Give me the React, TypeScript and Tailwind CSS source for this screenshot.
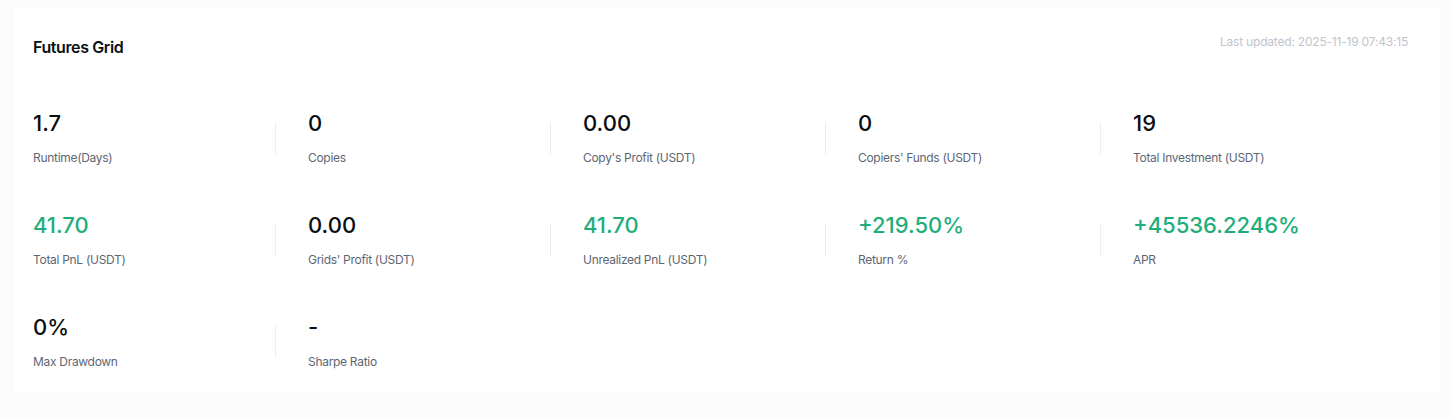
const stats = [
  { value: '1.7', label: 'Runtime(Days)' },
  { value: '0', label: 'Copies' },
  { value: '0.00', label: "Copy's Profit (USDT)" },
  { value: '0', label: "Copiers' Funds (USDT)" },
  { value: '19', label: 'Total Investment (USDT)' },
  { value: '41.70', label: 'Total PnL (USDT)', up: true },
  { value: '0.00', label: "Grids' Profit (USDT)" },
  { value: '41.70', label: 'Unrealized PnL (USDT)', up: true },
  { value: '+219.50%', label: 'Return %', up: true },
  { value: '+45536.2246%', label: 'APR', up: true },
  { value: '0%', label: 'Max Drawdown' },
  { value: '-', label: 'Sharpe Ratio' },
]

export default function App() {
  return (
    <div className="min-h-[418px] bg-[#fcfcfc] pt-[8px] pl-[14px] pr-[13px] font-['Inter',sans-serif]">
      <div className="bg-white pt-[27px] pb-[23px] pl-[19px] pr-[32px]">
        {/* Header */}
        <div className="flex items-start justify-between">
          <h2 className="text-[16px] leading-6 font-semibold text-[#0b0e11] tracking-[-0.4px]">Futures Grid</h2>
          <span className="text-[12px] leading-6 text-[#c1c4cc] tracking-[-0.2px] -mt-[5px]">
            Last updated: 2025-11-19 07:43:15
          </span>
        </div>

        {/* Stats */}
        <div className="mt-[50px] grid grid-cols-[repeat(5,275px)] gap-y-[45px]">
          {stats.map((s, i) => {
            const lastInRow = i % 5 === 4 || i === stats.length - 1
            return (
              <div key={s.label} className="flex items-center pr-[32px]">
                <div className="flex-1">
                  <div
                    className={`text-[22px] leading-7 font-medium ${s.up ? 'text-[#1fae7a]' : 'text-[#0b0e11]'}`}
                  >
                    {s.value}
                  </div>
                  <div className="mt-[13px] text-[12px] leading-4 tracking-[-0.3px] text-[#5e6673]">{s.label}</div>
                </div>
                {!lastInRow && <div className="w-px h-8 bg-[#eeeeee]" />}
              </div>
            )
          })}
        </div>
      </div>
    </div>
  )
}
